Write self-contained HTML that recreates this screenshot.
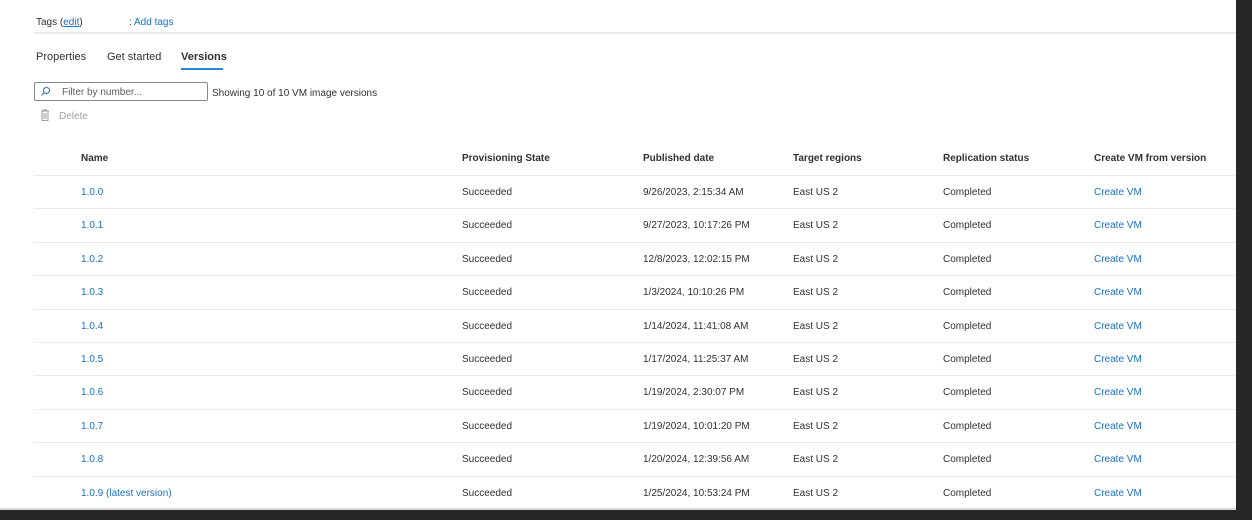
<!DOCTYPE html><html><head><style>
body{margin:0;width:1252px;height:520px;background:#262626;overflow:hidden;font-family:"Liberation Sans",sans-serif;font-size:10px;color:#323130}
#p{position:absolute;left:0;top:0;width:1236px;height:508px;background:#fff;border-bottom:2px solid #d8d8d8}
.a{position:absolute;white-space:nowrap}
.l{color:#1a6fc8}
.hl{position:absolute;left:34px;width:1202px;height:1px;background:#edebe9}
</style></head><body><div id="p">
<div class="a" style="left:36px;top:17px">Tags (<span class="l" style="text-decoration:underline">edit</span>)</div>
<div class="a" style="left:129px;top:17px">: <span class="l">Add tags</span></div>
<div class="hl" style="top:32px;height:2px"></div>
<div class="a" style="left:36px;top:51px;font-size:11px">Properties</div>
<div class="a" style="left:107px;top:51px;font-size:11px">Get started</div>
<div class="a" style="left:181px;top:51px;font-size:11px;font-weight:bold">Versions</div>
<div class="a" style="left:181px;top:68px;width:42px;height:2px;background:#2b88d8"></div>
<div class="a" style="left:34px;top:82px;width:172px;height:17px;border:1px solid #8a8886;border-radius:2px"></div>
<svg class="a" style="left:40px;top:86px" width="11" height="11" viewBox="0 0 11 11"><circle cx="6.5" cy="4.5" r="3" fill="none" stroke="#1a6fc8"/><path d="M4.3 6.7L1.5 9.5" stroke="#1a6fc8"/></svg>
<div class="a" style="left:62px;top:87px;color:#605e5c">Filter by number...</div>
<div class="a" style="left:212px;top:88px">Showing 10 of 10 VM image versions</div>
<svg class="a" style="left:40px;top:109px" width="10" height="12" viewBox="0 0 10 12"><path d="M1 2h8M3.5 2V1h3v1M2 2.5v9h6v-9M4 4v6M6 4v6" fill="none" stroke="#a19f9d"/></svg>
<div class="a" style="left:59px;top:111px;color:#a19f9d">Delete</div>
<div class="a" style="left:81px;top:153px;font-weight:bold">Name</div>
<div class="a" style="left:462px;top:153px;font-weight:bold">Provisioning State</div>
<div class="a" style="left:643px;top:153px;font-weight:bold">Published date</div>
<div class="a" style="left:793px;top:153px;font-weight:bold">Target regions</div>
<div class="a" style="left:943px;top:153px;font-weight:bold">Replication status</div>
<div class="a" style="left:1094px;top:153px;font-weight:bold">Create VM from version</div>
<div id="rows"></div>
</div>
<script>
var d=["9/26/2023, 2:15:34 AM","9/27/2023, 10:17:26 PM","12/8/2023, 12:02:15 PM","1/3/2024, 10:10:26 PM","1/14/2024, 11:41:08 AM","1/17/2024, 11:25:37 AM","1/19/2024, 2:30:07 PM","1/19/2024, 10:01:20 PM","1/20/2024, 12:39:56 AM","1/25/2024, 10:53:24 PM"],h="";
for(var i=0;i<10;i++){var y=185+i*33.4;h+='<div class="hl" style="top:'+(y-10)+'px"></div>'+
'<div class="a l" style="left:81px;top:'+(y+2)+'px">1.0.'+i+(i==9?' (latest version)':'')+'</div>'+
'<div class="a" style="left:462px;top:'+(y+2)+'px">Succeeded</div>'+
'<div class="a" style="left:643px;top:'+(y+2)+'px">'+d[i]+'</div>'+
'<div class="a" style="left:793px;top:'+(y+2)+'px">East US 2</div>'+
'<div class="a" style="left:943px;top:'+(y+2)+'px">Completed</div>'+
'<div class="a l" style="left:1094px;top:'+(y+2)+'px">Create VM</div>';}
document.getElementById('rows').outerHTML=h;
</script></body></html>
